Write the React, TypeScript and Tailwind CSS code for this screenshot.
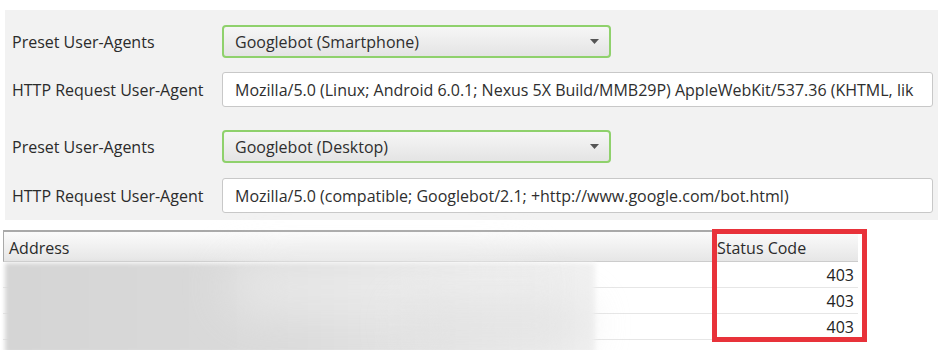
import type { ReactNode } from "react";

const font = { fontFamily: '"Open Sans", "Noto Sans", sans-serif' };

function Dropdown({ value }: { value: string }) {
  return (
    <div className="w-[389px] h-[33px] rounded-[4px] border-2 border-[#8fd16c] bg-gradient-to-b from-[#f6f6f6] to-[#e4e4e4] flex items-center pl-[11px] pr-[10px]">
      <span className="flex-1 text-[16px] text-[#2e2e2e]">{value}</span>
      <svg width="9" height="5" viewBox="0 0 9 5">
        <path d="M0 0h9L4.5 5z" fill="#555" />
      </svg>
    </div>
  );
}

function TextInput({ value }: { value: string }) {
  return (
    <div className="w-[711px] h-[35px] rounded-[3px] border border-[#c8c8c8] bg-white flex items-center pl-[12px] overflow-hidden">
      <span className="text-[16px] text-[#2e2e2e] whitespace-nowrap">{value}</span>
    </div>
  );
}

function Row({ label, children }: { label: string; children: ReactNode }) {
  return (
    <div className="flex items-center">
      <div className="w-[210px] text-[16px] text-[#2b2b2b]">{label}</div>
      {children}
    </div>
  );
}

export default function App() {
  return (
    <div className="relative w-[945px] h-[350px] bg-white overflow-hidden" style={font}>
      {/* Configuración */}
      <div className="ml-[5px] mt-[10px] w-[933px] h-[210px] bg-[#f2f2f2] pl-[7px] pt-[15px] flex flex-col">
        <Row label="Preset User-Agents">
          <Dropdown value="Googlebot (Smartphone)" />
        </Row>
        <div className="mt-[14px]">
          <Row label="HTTP Request User-Agent">
            <TextInput value="Mozilla/5.0 (Linux; Android 6.0.1; Nexus 5X Build/MMB29P) AppleWebKit/537.36 (KHTML, lik" />
          </Row>
        </div>
        <div className="mt-[23px]">
          <Row label="Preset User-Agents">
            <Dropdown value="Googlebot (Desktop)" />
          </Row>
        </div>
        <div className="mt-[15px]">
          <Row label="HTTP Request User-Agent">
            <TextInput value="Mozilla/5.0 (compatible; Googlebot/2.1; +http://www.google.com/bot.html)" />
          </Row>
        </div>
      </div>

      {/* Tabla */}
      <div className="mt-[10px] ml-[3px] w-[855px]">
        <div className="h-[32px] flex border-t-2 border-l border-[#a9a9a9] border-b border-b-[#cccccc] bg-gradient-to-b from-[#fbfbfb] to-[#e6e6e6]">
          <div className="w-[709px] pl-[5px] pt-[3px] flex items-center text-[16px] text-[#2b2b2b] border-r border-[#cfcfcf]">Address</div>
          <div className="flex-1 pl-[4px] pt-[3px] flex items-center text-[16px] text-[#2b2b2b]">Status Code</div>
        </div>
        {[0, 1, 2, 3].map((i) => (
          <div key={i} className="h-[26px] flex border-b border-[#e6e6e6]">
            <div className="w-[709px]" />
            <div className="flex-1 pr-[4px] flex items-center justify-end text-[16px] font-medium text-[#222]">
              {i < 3 ? "403" : ""}
            </div>
          </div>
        ))}
      </div>

      {/* Zona difuminada */}
      <div className="absolute left-[5px] top-[263px] w-[590px] h-[90px] bg-gradient-to-r from-[#d5d5d5] via-[#dbdbdb] to-[#f1f1f1] blur-[2px]" />
      <div className="absolute left-[230px] top-[262px] w-[300px] h-[50px] rounded-full bg-[#f3f3f3] opacity-60 blur-[24px]" />
      <div className="absolute left-[400px] top-[300px] w-[190px] h-[50px] rounded-full bg-[#e0e0e0] opacity-60 blur-[20px]" />

      {/* Recuadro rojo */}
      <div className="absolute left-[712px] top-[229px] w-[155px] h-[113px] border-[5px] border-[#e8323a]" />
    </div>
  );
}
